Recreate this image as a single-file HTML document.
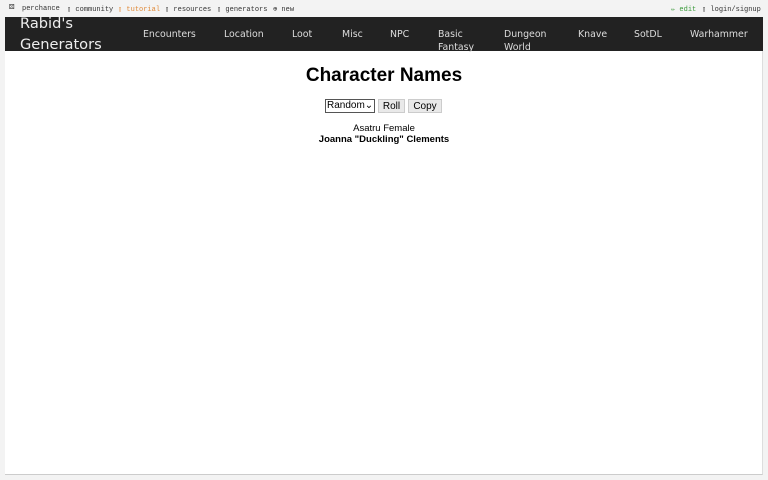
<!DOCTYPE html>
<html><head><style>
body{margin:0;width:768px;height:480px;background:#f3f3f3;font-family:"Liberation Sans",sans-serif;position:relative;overflow:hidden}
.top{position:absolute;top:0;left:0;width:768px;height:17px;font-family:"Liberation Mono",monospace;font-size:7px;color:#333}
.top span{position:absolute;top:5px}
.panel{position:absolute;left:5px;top:17px;width:757px;height:457px;background:#fff;border-right:1px solid #ddd;border-bottom:1px solid #ccc}
.nav{position:absolute;left:5px;top:17px;width:758px;height:34px;background:#222;color:#ddd;font-family:"DejaVu Sans",sans-serif;font-size:9.4px}
.nav span{position:absolute;line-height:13px}
.brand{font-size:14.6px;line-height:21px!important;color:#eee}
h1{position:absolute;top:65px;left:0;width:768px;text-align:center;margin:0;font-size:19px;font-weight:bold}
.ctl{position:absolute;top:99px;left:325px;font-size:10px}
.sel{position:absolute;left:0;top:0;border:1px solid #555;background:#fff;font-size:10px;line-height:12px;padding-left:1px;box-sizing:border-box;width:50px;height:14px}
.btn{position:absolute;top:0;height:14px;background:#e9e9e9;border:1px solid #ccc;font-size:10px;line-height:13px;text-align:center;box-sizing:border-box}
.r{position:absolute;left:0;width:768px;text-align:center;font-size:9.5px}
</style></head><body>
<div class="top">
<span style="left:9px;font-size:9px;top:2px">⚄</span>
<span style="left:22px">perchance</span>
<span style="left:67px">▯ community</span>
<span style="left:118px;color:#e08a3a">▯ tutorial</span>
<span style="left:165px">▯ resources</span>
<span style="left:217px">▯ generators</span>
<span style="left:273px">⊕ new</span>
<span style="left:671px;color:#3a9a3a">✏ edit</span>
<span style="left:702px">▯ login/signup</span>
</div>
<div class="panel"></div>
<div class="nav">
<span class="brand" style="left:15px;top:-4px">Rabid's<br>Generators</span>
<span style="left:138px;top:11px">Encounters</span>
<span style="left:219px;top:11px">Location</span>
<span style="left:287px;top:11px">Loot</span>
<span style="left:337px;top:11px">Misc</span>
<span style="left:385px;top:11px">NPC</span>
<span style="left:433px;top:11px">Basic<br>Fantasy</span>
<span style="left:499px;top:11px">Dungeon<br>World</span>
<span style="left:573px;top:11px">Knave</span>
<span style="left:629px;top:11px">SotDL</span>
<span style="left:685px;top:11px">Warhammer</span>
</div>
<h1>Character Names</h1>
<div class="ctl">
<div class="sel">Random⌄</div>
<div class="btn" style="left:53px;width:27px">Roll</div>
<div class="btn" style="left:83px;width:34px">Copy</div>
</div>
<div class="r" style="top:123px">Asatru Female</div>
<div class="r" style="top:134px;font-weight:bold">Joanna "Duckling" Clements</div>
</body></html>
